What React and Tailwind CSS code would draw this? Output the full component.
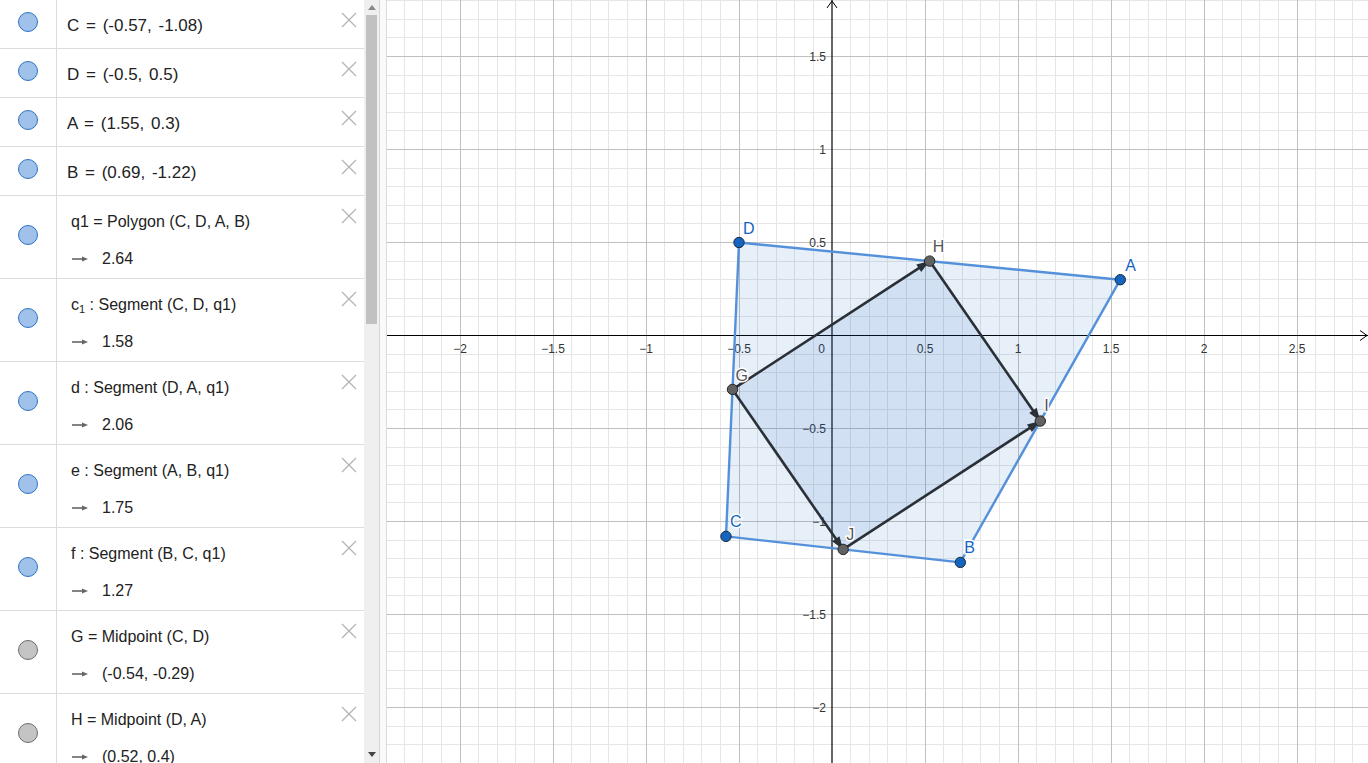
import React from "react";

const FONT = { fontFamily: '"Liberation Sans", Arial, sans-serif' };

// algebra rows
const rows = [
  { color: "blue", line1: "C = (-0.57, -1.08)" },
  { color: "blue", line1: "D = (-0.5, 0.5)" },
  { color: "blue", line1: "A = (1.55, 0.3)" },
  { color: "blue", line1: "B = (0.69, -1.22)" },
  { color: "blue", line1: "q1 = Polygon (C, D, A, B)", line2: "2.64" },
  { color: "blue", sub: true, line1: " : Segment (C, D, q1)", line2: "1.58" },
  { color: "blue", line1: "d : Segment (D, A, q1)", line2: "2.06" },
  { color: "blue", line1: "e : Segment (A, B, q1)", line2: "1.75" },
  { color: "blue", line1: "f : Segment (B, C, q1)", line2: "1.27" },
  { color: "gray", line1: "G = Midpoint (C, D)", line2: "(-0.54, -0.29)" },
  { color: "gray", line1: "H = Midpoint (D, A)", line2: "(0.52, 0.4)" },
];

function Marker({ color }) {
  return color === "blue" ? (
    <div className="w-5 h-5 rounded-full bg-[#9fc1ea] border border-[#2f73c6]" />
  ) : (
    <div className="w-5 h-5 rounded-full bg-[#c4c4c4] border border-[#6d6d6d]" />
  );
}

function CloseX() {
  return (
    <svg width="16" height="16" viewBox="0 0 16 16" className="absolute right-[7px] top-[12px]">
      <path d="M1 1 L15 15 M15 1 L1 15" stroke="#b4b4b4" strokeWidth="1.3" fill="none" />
    </svg>
  );
}

function Arrow() {
  return (
    <svg width="17" height="8" viewBox="0 0 17 8" className="shrink-0">
      <path d="M0 4 H11" stroke="#666" strokeWidth="1.6" />
      <path d="M10 1.4 L16 4 L10 6.6 Z" fill="#666" />
    </svg>
  );
}

function Row({ row }) {
  const two = !!row.line2;
  return (
    <div
      className={`relative flex border-b border-[#dcdcdc] ${two ? "h-[83px]" : "h-[49px]"}`}
    >
      <div className="w-[57px] shrink-0 border-r border-[#dcdcdc] flex items-center justify-center pb-[4px]">
        <Marker color={row.color} />
      </div>
      {two ? (
        <div className="flex flex-col pl-[14px] pt-[12px] text-[16px] text-[#222]">
          <div className="h-[27px] leading-[27px] whitespace-nowrap">
            {row.sub ? (
              <>
                c<sub className="text-[11px]">1</sub>
              </>
            ) : null}
            {row.line1}
          </div>
          <div className="flex items-center gap-[13px] h-[27px] mt-[10px] pl-[1px] whitespace-nowrap">
            <Arrow />
            <span>{row.line2}</span>
          </div>
        </div>
      ) : (
        <div className="pl-[10px] pt-[13px] text-[17px] text-[#222] whitespace-nowrap [word-spacing:2px]">
          {row.line1}
        </div>
      )}
      <CloseX />
    </div>
  );
}

// graphics view
const W = 982;
const H = 763;
const OX = 445;
const OY = 335.5;
const S = 186;
const px = (x) => OX + x * S;
const py = (y) => OY - y * S;

const P = {
  C: [-0.57, -1.08],
  D: [-0.5, 0.5],
  A: [1.55, 0.3],
  B: [0.69, -1.22],
};
const mid = (a, b) => [(a[0] + b[0]) / 2, (a[1] + b[1]) / 2];
P.G = mid(P.C, P.D);
P.H = mid(P.D, P.A);
P.I = mid(P.A, P.B);
P.J = mid(P.B, P.C);

function Grid() {
  const minor = [];
  const major = [];
  const step = S / 10;
  for (let k = Math.ceil(-OX / step); k * step + OX <= W; k++) {
    const x = OX + k * step;
    if (k === 0) continue;
    const l = <line key={"x" + k} x1={x} y1={0} x2={x} y2={H} stroke={k % 5 === 0 ? "#c0c0c0" : "#e6e6e6"} strokeWidth="1" />;
    (k % 5 === 0 ? major : minor).push(l);
  }
  for (let k = Math.ceil(-OY / step); k * step + OY <= H; k++) {
    const y = OY + k * step;
    if (k === 0) continue;
    const l = <line key={"y" + k} x1={0} y1={y} x2={W} y2={y} stroke={k % 5 === 0 ? "#c0c0c0" : "#e6e6e6"} strokeWidth="1" />;
    (k % 5 === 0 ? major : minor).push(l);
  }
  return (
    <g shapeRendering="crispEdges">
      {minor}
      {major}
    </g>
  );
}

function Vector({ from, to }) {
  const x1 = px(from[0]), y1 = py(from[1]);
  const x2 = px(to[0]), y2 = py(to[1]);
  const dx = x2 - x1, dy = y2 - y1;
  const len = Math.hypot(dx, dy);
  const ux = dx / len, uy = dy / len;
  const bx = x2 - ux * 13, by = y2 - uy * 13;
  const hx = -uy * 4.5, hy = ux * 4.5;
  return (
    <g>
      <line x1={x1} y1={y1} x2={bx + ux * 2} y2={by + uy * 2} stroke="#2a3036" strokeWidth="2.6" />
      <path d={`M${x2} ${y2} L${bx + hx} ${by + hy} L${bx - hx} ${by - hy} Z`} fill="#2a3036" />
    </g>
  );
}

function Graphics() {
  const xLabels = [-2, -1.5, -1, -0.5, 0.5, 1, 1.5, 2, 2.5];
  const yLabels = [1.5, 1, 0.5, -0.5, -1, -1.5, -2];
  const fmt = (v) => (v < 0 ? "\u2212" + Math.abs(v) : String(v));
  const poly = ["C", "D", "A", "B"].map((k) => `${px(P[k][0])},${py(P[k][1])}`).join(" ");
  const inner = ["G", "H", "I", "J"].map((k) => `${px(P[k][0])},${py(P[k][1])}`).join(" ");
  const labels = [
    { k: "D", dx: 4, dy: -9, c: "#1565c0" },
    { k: "A", dx: 5, dy: -9, c: "#1565c0" },
    { k: "B", dx: 4, dy: -9, c: "#1565c0" },
    { k: "C", dx: 4, dy: -9, c: "#1565c0" },
    { k: "G", dx: 3, dy: -8, c: "#555" },
    { k: "H", dx: 3, dy: -9, c: "#555" },
    { k: "I", dx: 4, dy: -10, c: "#555" },
    { k: "J", dx: 3, dy: -9, c: "#555" },
  ];
  return (
    <svg width={W} height={H} viewBox={`0 0 ${W} ${H}`} className="block" style={FONT}>
      <rect width={W} height={H} fill="#fff" />
      <Grid />
      {/* axes */}
      <line x1={0} y1={OY} x2={W} y2={OY} stroke="#000" strokeWidth="1.2" />
      <line x1={OX} y1={0} x2={OX} y2={H} stroke="#000" strokeWidth="1.2" />
      <path d={`M${W - 9} ${OY - 5} L${W - 2} ${OY} L${W - 9} ${OY + 5}`} stroke="#000" fill="none" strokeWidth="1" />
      <path d={`M${OX - 5} ${8} L${OX} ${1} L${OX + 5} ${8}`} stroke="#000" fill="none" strokeWidth="1" />
      <g fontSize="12" fill="#333">
        {xLabels.map((v) => (
          <text key={v} x={px(v)} y={OY + 17} textAnchor="middle">
            {fmt(v)}
          </text>
        ))}
        <text x={OX - 7} y={OY + 17} textAnchor="end">0</text>
        {yLabels.map((v) => (
          <text key={v} x={OX - 6} y={py(v) + 4} textAnchor="end">
            {fmt(v)}
          </text>
        ))}
      </g>
      {/* polygons */}
      <polygon points={poly} fill="rgba(21,101,192,0.1)" stroke="#5591db" strokeWidth="2.4" strokeLinejoin="round" />
      <polygon points={inner} fill="rgba(21,101,192,0.1)" stroke="none" />
      {/* vectors */}
      <Vector from={P.G} to={P.H} />
      <Vector from={P.H} to={P.I} />
      <Vector from={P.J} to={P.I} />
      <Vector from={P.G} to={P.J} />
      {/* points */}
      {["C", "D", "A", "B"].map((k) => (
        <circle key={k} cx={px(P[k][0])} cy={py(P[k][1])} r="5.2" fill="#1565c0" stroke="#1b2a3a" strokeWidth="1" />
      ))}
      {["G", "H", "I", "J"].map((k) => (
        <circle key={k} cx={px(P[k][0])} cy={py(P[k][1])} r="5.2" fill="#616161" stroke="#222" strokeWidth="1" />
      ))}
      <g fontSize="16">
        {labels.map((l) => (
          <text key={l.k} x={px(P[l.k][0]) + l.dx} y={py(P[l.k][1]) + l.dy} fill={l.c} stroke="#fff" strokeWidth="3" paintOrder="stroke">
            {l.k}
          </text>
        ))}
      </g>
    </svg>
  );
}

export default function App() {
  return (
    <div className="w-[1368px] h-[763px] flex overflow-hidden bg-white" style={FONT}>
      {/* algebra view */}
      <div className="w-[364px] h-full overflow-hidden shrink-0">
        {rows.map((r, i) => (
          <Row key={i} row={r} />
        ))}
      </div>
      {/* scrollbar */}
      <div className="w-[15px] h-full shrink-0 bg-[#efefef] flex flex-col items-center border-r border-[#d6d6d6] box-content">
        <div className="h-[15px] flex items-center justify-center">
          <div className="w-0 h-0 border-l-[4px] border-r-[4px] border-b-[5px] border-l-transparent border-r-transparent border-b-[#888]" />
        </div>
        <div className="w-[11px] h-[309px] bg-[#c1c1c1]" />
        <div className="flex-1" />
        <div className="h-[18px] flex items-center justify-center">
          <div className="w-0 h-0 border-l-[4px] border-r-[4px] border-t-[5px] border-l-transparent border-r-transparent border-t-[#444]" />
        </div>
      </div>
      <div className="w-[6px] h-full shrink-0 bg-[#fafafa]" />
      {/* graphics view */}
      <div className="flex-1 h-full overflow-hidden border-l border-[#dcdcdc]">
        <Graphics />
      </div>
    </div>
  );
}
